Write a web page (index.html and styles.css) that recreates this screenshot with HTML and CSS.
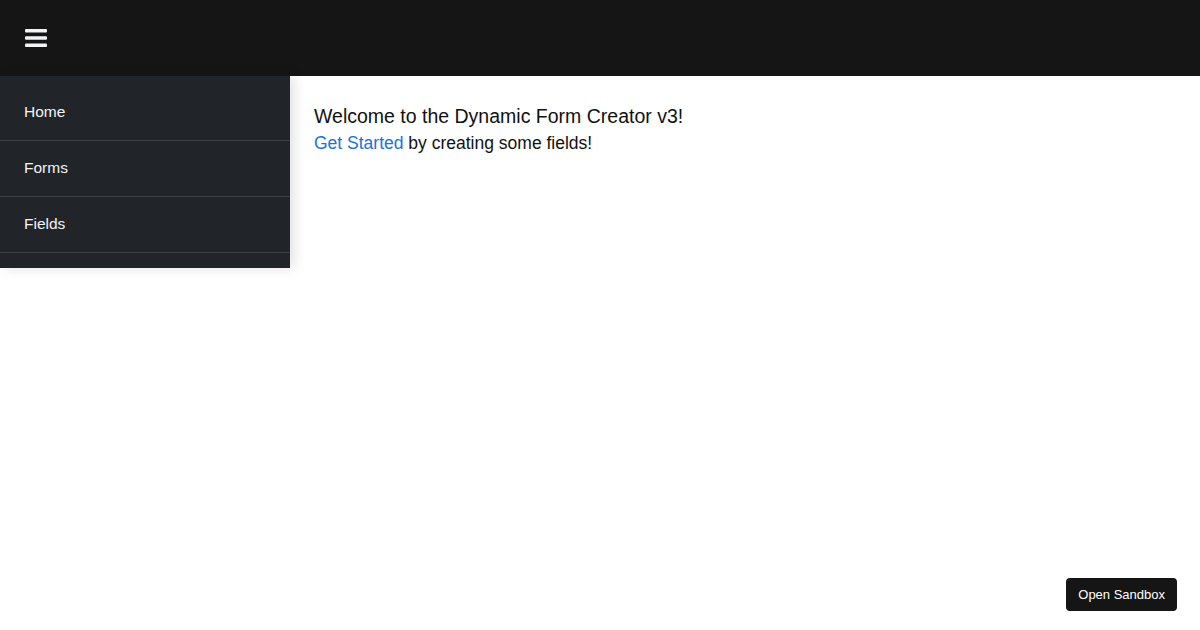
FILE: index.html
```html
<!DOCTYPE html>
<html lang="en">
<head>
  <meta charset="UTF-8">
  <title>Dynamic Form Creator</title>
  <link rel="stylesheet" href="styles.css">
</head>
<body>
<header class="topbar">
  <button class="menu-btn" aria-label="Menu">
    <svg width="22" height="20" viewBox="0 0 22 20">
      <rect x="0" y="1" width="22" height="3.5" rx="1" fill="#f1f3f5"/>
      <rect x="0" y="8.25" width="22" height="3.5" rx="1" fill="#f1f3f5"/>
      <rect x="0" y="15.5" width="22" height="3.5" rx="1" fill="#f1f3f5"/>
    </svg>
  </button>
</header>
<div class="layout">
  <nav class="sidebar">
    <a href="#" class="nav-item">Home</a>
    <a href="#" class="nav-item">Forms</a>
    <a href="#" class="nav-item">Fields</a>
  </nav>
  <main class="content">
    <h1 class="title">Welcome to the Dynamic Form Creator v3!</h1>
    <p class="lead"><a href="#">Get Started</a> by creating some fields!</p>
  </main>
</div>
<button class="sandbox-btn">Open Sandbox</button>
</body>
</html>
```

FILE: styles.css
```css
html, body {
  margin: 0;
  height: 100%;
  background-color: #fff;
  font-family: "Liberation Sans", Arial, sans-serif;
}
.topbar {
  height: 76px;
  background-color: #151515;
  display: flex;
  align-items: center;
  padding-left: 25px;
}
.menu-btn {
  background: none;
  border: none;
  padding: 0;
  display: flex;
  cursor: pointer;
}
.layout {
  display: flex;
  align-items: flex-start;
}
.sidebar {
  width: 290px;
  flex-shrink: 0;
  padding: 9px 0 15px;
  background-color: #212529;
  display: flex;
  flex-direction: column;
  box-shadow: 4px 0 12px rgba(0, 0, 0, 0.12);
}
.nav-item {
  height: 56px;
  box-sizing: border-box;
  padding: 0 0 1px 24px;
  display: flex;
  align-items: center;
  color: #f1f3f5;
  text-decoration: none;
  font-size: 15.5px;
  border-bottom: 1px solid #3d4146;
}
.content {
  padding: 24px;
}
.title {
  margin: 5px 0 5px;
  font-size: 19.5px;
  font-weight: normal;
  color: #111;
}
.lead {
  margin: 0;
  font-size: 17.5px;
  color: #111;
}
.lead a {
  color: #1a73d9;
  text-decoration: none;
}
.sandbox-btn {
  position: fixed;
  right: 23px;
  bottom: 19px;
  height: 33px;
  padding: 0 12px;
  border: none;
  border-radius: 4px;
  background-color: #151515;
  color: #fff;
  font-family: "Liberation Sans", Arial, sans-serif;
  font-size: 13px;
  cursor: pointer;
}
```
